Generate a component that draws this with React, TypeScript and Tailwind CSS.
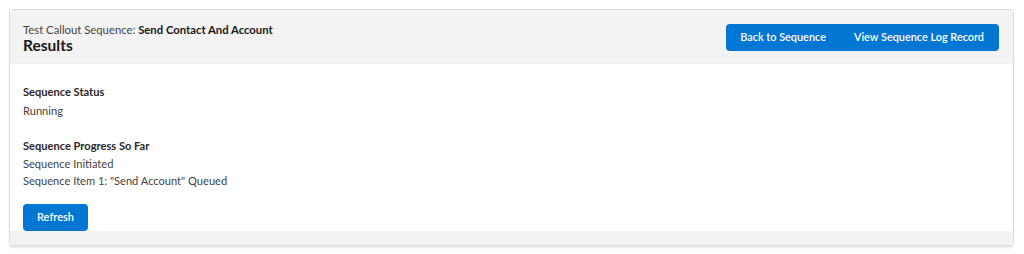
import React from "react";

export default function App() {
  return (
    <div className="w-[1024px] h-[254px] bg-white p-[9px] pr-[10px]" style={{ fontFamily: 'Lato, "Noto Sans", sans-serif' }}>
      <div className="rounded-[4px] border border-[#dddbda] shadow-[0_2px_2px_rgba(0,0,0,0.1)] overflow-hidden">
        <div className="bg-[#f3f3f3] h-[54px] flex items-start justify-between pl-[13px] pr-[14px] pt-[13px] border-b border-[#eeeeee]">
          <div className="text-[#181818]">
            <div className="text-[11.3px] leading-[14px] text-[#444444]">
              Test Callout Sequence: <span className="font-bold text-[#181818]">Send Contact And Account</span>
            </div>
            <div className="text-[15.5px] leading-[17px] font-bold">Results</div>
          </div>
          <div className="flex h-[27px] rounded-[4px] bg-[#0176d3] text-white text-[10.9px] font-semibold mt-[1px]">
            <button className="pl-[14px] pr-[14px] h-full">Back to Sequence</button>
            <button className="pl-[14px] pr-[15px] h-full">View Sequence Log Record</button>
          </div>
        </div>
        <div className="bg-white pl-[13px] pt-[19px] h-[167px] text-[11.1px] text-[#444444]">
          <div className="font-bold leading-[18px] text-[#2b2826]">Sequence Status</div>
          <div className="leading-[18px] mt-[1px]">Running</div>
          <div className="font-bold leading-[18px] mt-[17px] text-[#2b2826]">Sequence Progress So Far</div>
          <div className="leading-[17px]">Sequence Initiated</div>
          <div className="leading-[17px]">Sequence Item 1: "Send Account" Queued</div>
          <button className="mt-[15px] h-[27px] w-[65px] rounded-[4px] bg-[#0176d3] text-white text-[11px] font-semibold">Refresh</button>
        </div>
        <div className="bg-[#f3f3f3] h-[14px]" />
      </div>
    </div>
  );
}
